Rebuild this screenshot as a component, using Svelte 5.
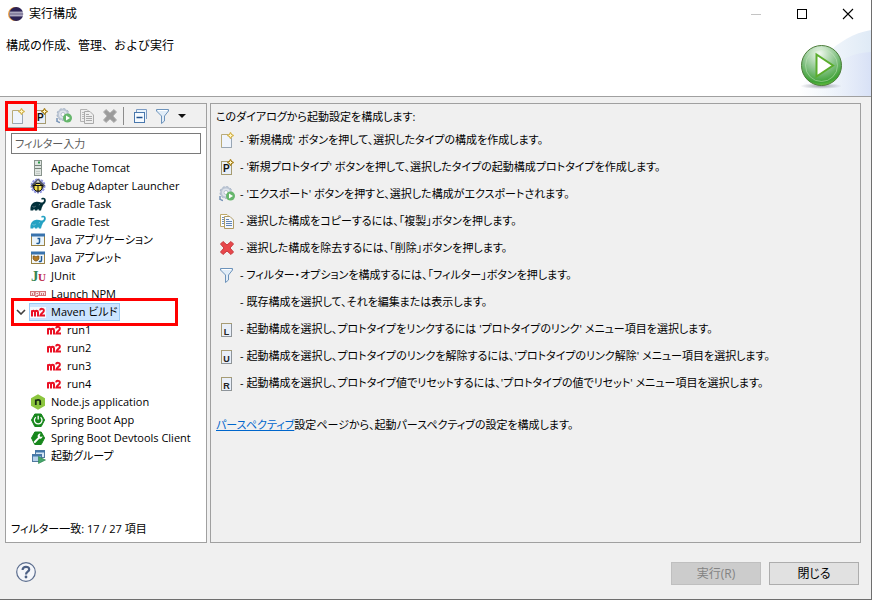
<script lang="ts">
	type Item = { icon: string; label: string; child?: boolean; open?: boolean };

	const items: Item[] = [
		{ icon: "tomcat", label: "Apache Tomcat" },
		{ icon: "debug", label: "Debug Adapter Launcher" },
		{ icon: "gradleTask", label: "Gradle Task" },
		{ icon: "gradleTest", label: "Gradle Test" },
		{ icon: "java", label: "Java アプリケーション" },
		{ icon: "applet", label: "Java アプレット" },
		{ icon: "junit", label: "JUnit" },
		{ icon: "npm", label: "Launch NPM" },
		{ icon: "maven", label: "Maven ビルド", open: true },
		{ icon: "maven", label: "run1", child: true },
		{ icon: "maven", label: "run2", child: true },
		{ icon: "maven", label: "run3", child: true },
		{ icon: "maven", label: "run4", child: true },
		{ icon: "node", label: "Node.js application" },
		{ icon: "boot", label: "Spring Boot App" },
		{ icon: "devtools", label: "Spring Boot Devtools Client" },
		{ icon: "group", label: "起動グループ" },
	];

	const hints = [
		{ icon: "new", text: "- '新規構成' ボタンを押して、選択したタイプの構成を作成します。" },
		{ icon: "proto", text: "- '新規プロトタイプ' ボタンを押して、選択したタイプの起動構成プロトタイプを作成します。" },
		{ icon: "export", text: "- 'エクスポート' ボタンを押すと、選択した構成がエクスポートされます。" },
		{ icon: "copy", text: "- 選択した構成をコピーするには、「複製」ボタンを押します。" },
		{ icon: "delete", text: "- 選択した構成を除去するには、「削除」ボタンを押します。" },
		{ icon: "filter", text: "- フィルター・オプションを構成するには、「フィルター」ボタンを押します。" },
		{ icon: "", text: "- 既存構成を選択して、それを編集または表示します。" },
		{ icon: "L", text: "- 起動構成を選択し、プロトタイプをリンクするには 'プロトタイプのリンク' メニュー項目を選択します。" },
		{ icon: "U", text: "- 起動構成を選択し、プロトタイプのリンクを解除するには、'プロトタイプのリンク解除' メニュー項目を選択します。" },
		{ icon: "R", text: "- 起動構成を選択し、プロトタイプ値でリセットするには、'プロトタイプの値でリセット' メニュー項目を選択します。" },
	];

	const tools = [
		{ icon: "new", label: "新規構成", disabled: false },
		{ icon: "proto", label: "新規プロトタイプ", disabled: false },
		{ icon: "export", label: "エクスポート", disabled: false },
		{ icon: "copyOff", label: "複製", disabled: true },
		{ icon: "deleteOff", label: "削除", disabled: true },
	];

	let selected = $state(8);
	let filter = $state("");
</script>

{#snippet elephant(color: string)}
	<path
		d="M0.5 14.5C0 10 2 6.5 5.5 6C7.5 5.6 9.5 6 11 6.6C12.8 6.6 14 5.4 14 4.2C14 3.2 12.8 3 12.2 3.8L11 3C11.8 1.5 14 1.2 15.2 2.5C16.6 4.4 15.4 7.2 13.4 8.6C12.6 9.4 12.4 11 11.8 11.6L11 14.5H8.8C8.8 12.8 7.4 12.8 7.2 14.5H5C4.8 12.8 3.4 12.8 3.2 14.5Z"
		fill={color}
	/>
	<path d="M8.8 9L10 8.4M2.4 10.4C3.4 11.4 5 11.2 5.8 10" stroke="#fff" stroke-opacity=".55" stroke-width=".6" fill="none" />
{/snippet}

{#snippet sparkle(color: string)}
	<path d="M11.5 0L12.8 2.2L15 3.5L12.8 4.8L11.5 7L10.2 4.8L8 3.5L10.2 2.2Z" fill={color} stroke={color} stroke-width=".5" />
	<path d="M11.5 1.8V5.2M9.8 3.5H13.2" stroke="#fff6c8" />
{/snippet}

{#snippet icon(name: string)}
	<svg class="icon" viewBox="0 0 16 16" aria-hidden="true">
		{#if name === "new"}
			<path d="M2.5 2.5H9L12.5 6V15.5H2.5Z" fill="#eff4fc" stroke="#b9ab78" />
			<path d="M12.5 6V15.5H2.5" fill="none" stroke="#98a6b5" />
			{@render sparkle("#d3b145")}
		{:else if name === "proto"}
			<rect x="2.5" y="2.5" width="10" height="13" fill="#e9eff8" stroke="#a59b70" />
			<text x="4" y="13" font-size="10" font-weight="700" fill="#111">P</text>
			{@render sparkle("#a47b10")}
		{:else if name === "export"}
			<circle cx="7" cy="6.5" r="5" fill="#e0e5ed" stroke="#bcc6d4" stroke-width="2" />
			<circle cx="7" cy="6.5" r="6" fill="none" stroke="#a3b1c4" stroke-dasharray="2 2" />
			<circle cx="7" cy="6.5" r="2" fill="#fff" stroke="#b8bfd0" />
			<path d="M1 10V14M1 13C2 14 3 14.5 4 14.5" stroke="#7894b8" stroke-width="1.5" fill="none" />
			<circle cx="11.5" cy="10" r="4.5" fill="#66b66c" />
			<path d="M10 7.5L14 10L10 12.5Z" fill="#fff" />
		{:else if name === "copy" || name === "copyOff"}
			{@const off = name === "copyOff"}
			<path d="M1.5 1.5H8L10.5 4V13.5H1.5Z" fill={off ? "#eee" : "#fff"} stroke={off ? "#b3b3b3" : "#c0aa6a"} />
			<path d="M3 4.5H6M3 6.5H6M3 8.5H6M3 10.5H6" stroke={off ? "#bbb" : "#7190b5"} />
			<path d="M5.5 3.5H11L14.5 7V15.5H5.5Z" fill={off ? "#eee" : "#f4f8ff"} stroke={off ? "#aaa" : "#b09b62"} />
			<path d="M7 6.5H10M7 8.5H13M7 10.5H13M7 12.5H13" stroke={off ? "#aaa" : "#6387b4"} />
		{:else if name === "delete" || name === "deleteOff"}
			{@const off = name === "deleteOff"}
			<path
				d="M1.5 4L4 1.5L8 5L12 1.5L14.5 4L11 8L14.5 12L12 14.5L8 11L4 14.5L1.5 12L5 8Z"
				fill={off ? "#9b9b9b" : "#e8474b"}
				stroke={off ? "#b4b4b4" : "#c8393d"}
				stroke-linejoin="round"
			/>
		{:else if name === "filter"}
			<path d="M1.5 1.5H13.5V3L9.5 8V13L6.5 15.5V8L1.5 3Z" fill="#e1edf8" stroke="#6d93bb" stroke-linejoin="round" />
			<path d="M3 2.5H12" stroke="#fff" />
		{:else if name === "collapse"}
			<path d="M4.5 11V1.5H14.5V11" fill="#e9f3fc" stroke="#7d9cc4" />
			<rect x="2.5" y="4.5" width="10" height="10" fill="#f5faff" stroke="#4a78ad" />
			<path d="M4.5 9.5H10.5" stroke="#1d4f8c" stroke-width="1.5" />
		{:else if name === "L" || name === "U" || name === "R"}
			<rect x="2.5" y="2.5" width="10" height="13" fill="#e9eff8" stroke="#a79c74" />
			<path d="M12.5 3V15.5H2.5" fill="none" stroke="#8d949b" />
			<text x="7.5" y="14" text-anchor="middle" font-size="9" font-weight="700" fill="#222">{name}</text>
		{:else if name === "tomcat"}
			<rect x="4.5" y=".5" width="7" height="15" fill="#dfe5e1" stroke="#89948d" />
			<path d="M8 2.5H10" stroke="#2a9a48" stroke-width="2" />
			<path d="M5 5.5H11M5 8.5H11" stroke="#758179" />
			<path d="M6 11.5H10M6 13.5H10" stroke="#c3cac5" />
		{:else if name === "debug"}
			<circle cx="8" cy="8" r="6.5" fill="#aeb4e8" stroke="#9095df" stroke-width="2" stroke-dasharray="2 1" />
			<path d="M8 .5L15 7.5L8 15L1 7.5Z" fill="#50545e" />
			<path d="M8 2L10 4.5H6Z" fill="#d9d9d9" />
			<path d="M4 8L6 5.5H10L12 8V11L10 13H6L4 11Z" fill="#f4df4c" stroke="#111" />
			<path d="M3 7.5H13M8 7V13" stroke="#111" />
		{:else if name === "gradleTask"}
			{@render elephant("#02303a")}
		{:else if name === "gradleTest"}
			{@render elephant("#25a2c3")}
		{:else if name === "java"}
			<rect x="1.5" y="2.5" width="13" height="11" fill="#eaf4fb" stroke="#9b8345" />
			<path d="M1 3H15" stroke="#3973ad" stroke-width="3" />
			<path d="M7.5 6.5H9.5V10C9.5 11.6 7.5 11.8 6.5 11" stroke="#205b96" stroke-width="1.5" fill="none" />
		{:else if name === "applet"}
			<rect x="1.5" y="2.5" width="13" height="11" fill="#f2f6f8" stroke="#9b8345" />
			<path d="M1 3H15" stroke="#3973ad" stroke-width="3" />
			<path d="M3 6H5L6 7L7 6H9V9L7 11H5L3 9Z" fill="#b47a24" stroke="#6c491b" stroke-width=".6" />
			<path d="M11.5 6V10C11.5 11.6 10 12 9 11.2" stroke="#205b96" stroke-width="1.5" fill="none" />
		{:else if name === "junit"}
			<text class="serif" x="1" y="13" font-size="15" font-weight="700" fill="#368653">J</text>
			<text class="serif" x="8" y="13" font-size="11" font-weight="700" fill="#bd2949">U</text>
		{:else if name === "npm"}
			<path d="M0 5H16V10H8V11H5V10H0Z" fill="#d07478" />
			<path d="M1.5 9V6.5H3.5V9M6 10V6.5H8.5V8.5H6M10.5 9V6.5H12.5V9M14.5 9V6.5H12.5" stroke="#fff" stroke-width=".8" fill="none" />
		{:else if name === "maven"}
			<rect y="3" width="16" height="11" fill="#fff" fill-opacity=".8" />
			<path d="M2 12.5V6.2M2 8C2 6.4 5 6.4 5 8.2V12.5M5 8.2C5 6.4 8 6.4 8 8.2V12.5" stroke="#ea1024" stroke-width="2" fill="none" />
			<path d="M10 6.4C10.4 4.2 14.2 4.4 13.8 6.8C13.6 8.6 11 9.4 10.4 11.5H15" stroke="#ea1024" stroke-width="2" fill="none" />
		{:else if name === "node"}
			<path d="M8 .3L15 4.2V11.8L8 15.7L1 11.8V4.2Z" fill="#8cc63f" />
			<path d="M5.8 11V5.5M5.8 7C6.4 5.4 10.2 5.2 10.2 7.6V11" stroke="#172e12" stroke-width="1.8" fill="none" />
		{:else if name === "boot"}
			<path d="M4.8 2H11.2L14.6 8L11.2 14.5H4.8L1.5 8Z" fill="#17871c" stroke="#17871c" stroke-linejoin="round" />
			<path d="M5.8 5.2A3.8 3.8 0 1 0 10.6 5.2M8.2 3.8V7.5" stroke="#fff" stroke-width="1.3" fill="none" />
		{:else if name === "devtools"}
			<path d="M4.8 2H11.2L14.6 8L11.2 14.5H4.8L1.5 8Z" fill="#17871c" stroke="#17871c" stroke-linejoin="round" />
			<path d="M4.8 12L9 7.6" stroke="#fff" stroke-width="2" stroke-linecap="round" />
			<path d="M10.6 3.6C8.4 3.6 7 5.6 8 7.6C9 9.4 12 9.2 12.6 6.2L10.8 7L9.6 5.8Z" fill="#fff" />
		{:else if name === "group"}
			<rect x="5.5" y="2.5" width="9" height="7" fill="#d5e6f6" stroke="#52799f" />
			<path d="M5 3.5H15" stroke="#4378aa" stroke-width="2" />
			<rect x="2.5" y="6.5" width="9" height="7" fill="#b6d1ec" stroke="#52799f" />
			<path d="M2 7.5H12" stroke="#4378aa" stroke-width="2" />
			<path d="M8.5 8.5L15.5 12L8.5 15.5Z" fill="#46a66a" stroke="#28814a" stroke-width=".6" />
		{/if}
	</svg>
{/snippet}

<div class="window">
	<div class="titleBar">
		<svg class="icon" viewBox="0 0 16 16" aria-hidden="true">
			<circle cx="7" cy="8" r="7" fill="#f1a13e" />
			<circle cx="8.2" cy="8" r="7" fill="#2c2255" />
			<path d="M1.6 6.2H15M1.2 8H15.2M1.6 9.8H15" stroke="#e5e2ef" />
		</svg>
		<span class="title">実行構成</span>
		<button class="control" disabled aria-label="最小化">
			<svg viewBox="0 0 12 12"><path d="M1 6.5H11" stroke="#c4c4c4" /></svg>
		</button>
		<button class="control" aria-label="最大化">
			<svg viewBox="0 0 12 12"><rect x="1.5" y="1.5" width="9" height="9" fill="none" stroke="#000" /></svg>
		</button>
		<button class="control" aria-label="ウィンドウを閉じる">
			<svg viewBox="0 0 12 12"><path d="M1 1L11 11M11 1L1 11" stroke="#000" stroke-width="1.1" /></svg>
		</button>
	</div>

	<header>
		<h1>構成の作成、管理、および実行</h1>
		<svg class="banner" viewBox="0 0 90 68" aria-hidden="true">
			<defs>
				<linearGradient id="swoosh" x1="0" x2="1">
					<stop offset="0" stop-color="#fff" />
					<stop offset="1" stop-color="#dfeaf6" />
				</linearGradient>
				<linearGradient id="swooshFront" x1="0" x2="1">
					<stop offset="0" stop-color="#fff" stop-opacity="0" />
					<stop offset="1" stop-color="#d8e1f6" />
				</linearGradient>
				<radialGradient id="ball" cx=".45" cy=".2" r=".85">
					<stop offset="0" stop-color="#f1f8ef" />
					<stop offset=".55" stop-color="#7fbf80" />
					<stop offset=".85" stop-color="#3fa235" />
					<stop offset="1" stop-color="#80d348" />
				</radialGradient>
				<radialGradient id="shade">
					<stop offset="0" stop-color="#667" stop-opacity=".6" />
					<stop offset="1" stop-color="#667" stop-opacity="0" />
				</radialGradient>
			</defs>
			<path d="M16 68C30 39 55 8 90 2V68Z" fill="url(#swoosh)" />
			<path d="M22 68C38 46 60 25 90 24V68Z" fill="url(#swooshFront)" />
			<ellipse cx="40" cy="58" rx="21" ry="3" fill="url(#shade)" />
			<circle cx="40.5" cy="37.5" r="20" fill="url(#ball)" stroke="#4d7d3b" />
			<circle cx="40.5" cy="37.5" r="16" fill="none" stroke="#c5e8bd" stroke-opacity=".5" />
			<path d="M35.5 26.5L52 37.5L35.5 48.5Z" fill="#fff" stroke="#5bad2d" stroke-width="2" />
		</svg>
	</header>

	<main>
		<section class="configs">
			<div class="toolBar">
				{#each tools as tool, i}
					<button class="tool" disabled={tool.disabled} aria-label={tool.label}>
						{@render icon(tool.icon)}
						{#if i === 0}
							<span class="mark markTool"></span>
						{/if}
					</button>
				{/each}
				<span class="separator"></span>
				<button class="tool" aria-label="すべて縮小表示">{@render icon("collapse")}</button>
				<button class="tool" aria-label="フィルター">{@render icon("filter")}</button>
				<button class="drop" aria-label="フィルター・メニュー">
					<svg viewBox="0 0 8 4"><path d="M0 0H8L4 4Z" fill="#111" /></svg>
				</button>
			</div>

			<input class="filter" type="text" placeholder="フィルター入力" aria-label="フィルター入力" bind:value={filter} />

			<ul class="tree">
				{#each items as item, i}
					<li class:child={item.child}>
						<span class="twisty">
							{#if item.open}
								<svg viewBox="0 0 10 6"><path d="M1 1L5 5L9 1" fill="none" stroke="#404040" stroke-width="1.6" /></svg>
							{/if}
						</span>
						<button class="node" class:selected={selected === i} onclick={() => (selected = i)}>
							{@render icon(item.icon)}
							<span>{item.label}</span>
						</button>
						{#if item.open}
							<span class="mark markRow"></span>
						{/if}
					</li>
				{/each}
			</ul>

			<p class="status">フィルター一致: 17 / 27 項目</p>
		</section>

		<section class="details">
			<p>このダイアログから起動設定を構成します:</p>
			<ul class="hints">
				{#each hints as hint}
					<li>{@render icon(hint.icon)}<span>{hint.text}</span></li>
				{/each}
			</ul>
			<p class="link"><a href="#perspective">パースペクティブ</a>設定ページから、起動パースペクティブの設定を構成します。</p>
		</section>
	</main>

	<footer>
		<button class="help" aria-label="ヘルプ">
			<svg viewBox="0 0 20 20">
				<circle cx="10" cy="10" r="9.3" fill="#f4f6fa" stroke="#5b6d8e" stroke-width="1.2" />
				<path d="M6.6 8C6.4 3.8 13.4 3.8 13.2 7.6C13.1 9.8 10 9.7 10 12.4" fill="none" stroke="#4d6185" stroke-width="2.2" />
				<circle cx="10" cy="15" r="1.4" fill="#4d6185" />
			</svg>
		</button>
		<button class="action" disabled>実行(R)</button>
		<button class="action">閉じる</button>
	</footer>
</div>

<style>
	:global(body) {
		margin: 0;
	}

	.window {
		box-sizing: border-box;
		display: flex;
		flex-direction: column;
		min-height: 100vh;

		background-color: #f0f0f0;
		border-right: 1px solid #6e6e6e;
		border-bottom: 1px solid #6e6e6e;

		color: #000;
		font-family: "Open Sans", "Noto Sans CJK JP", sans-serif;
		font-size: 11px;
		font-feature-settings: "palt";
		line-height: 18px;
	}

	button,
	input {
		box-sizing: border-box;
		margin: 0;
		padding: 0;
		border: none;
		background: none;
		color: inherit;
		font: inherit;
		font-feature-settings: inherit;
	}

	h1,
	p,
	ul {
		margin: 0;
		padding: 0;
		list-style: none;
	}

	svg {
		display: block;
	}

	.icon {
		flex: none;
		width: 16px;
		height: 16px;
		font-family: "Liberation Sans", sans-serif;
	}

	.serif {
		font-family: "Liberation Serif", serif;
	}

	.titleBar {
		display: flex;
		align-items: center;
		height: 28px;
		padding-left: 8px;
		background-color: #fff;
	}

	.title {
		flex: 1;
		padding-left: 5px;
		font-size: 12px;
	}

	.control {
		display: flex;
		align-items: center;
		justify-content: center;
		width: 46px;
		height: 28px;
	}

	.control svg {
		width: 12px;
		height: 12px;
	}

	header {
		display: flex;
		justify-content: space-between;
		background-color: #fff;
		border-bottom: 1px solid #a0a0a0;
	}

	h1 {
		padding: 9px 6px;
		font-size: 12px;
		font-weight: 400;
		font-feature-settings: normal;
	}

	.banner {
		flex: none;
		width: 90px;
		height: 68px;
	}

	main {
		display: flex;
		flex: 1;
		gap: 3px;
		padding: 6px 10px 0 5px;
	}

	.configs,
	.details {
		box-sizing: border-box;
		border: 1px solid #a0a0a0;
	}

	.configs {
		display: flex;
		flex: none;
		flex-direction: column;
		width: 202px;
		background-color: #fff;
	}

	.toolBar {
		display: flex;
		align-items: center;
		height: 23px;
		background-color: #f0f0f0;
		border-bottom: 1px solid #a0a0a0;
	}

	.tool {
		display: flex;
		align-items: center;
		justify-content: center;
		position: relative;
		width: 23px;
		height: 23px;
	}

	.separator {
		width: 1px;
		height: 18px;
		margin: 0 4px 0 2px;
		background-color: #8c8c8c;
	}

	.drop {
		width: 16px;
		height: 23px;
		padding: 0 4px;
	}

	.mark {
		box-sizing: border-box;
		position: absolute;
		z-index: 1;
		border: 3px solid #ff0000;
		pointer-events: none;
	}

	.markTool {
		top: -3px;
		left: -1px;
		width: 32px;
		height: 30px;
	}

	.markRow {
		top: -5px;
		left: 5px;
		width: 167px;
		height: 28px;
	}

	.filter {
		height: 21px;
		margin: 5px;
		padding: 0 3px;
		border: 1px solid #7a7a7a;
		background-color: #fff;
	}

	.filter::placeholder {
		color: #5c5c5c;
		opacity: 1;
	}

	.tree {
		flex: 1;
	}

	.tree li {
		display: flex;
		align-items: center;
		position: relative;
		height: 18px;
		padding-left: 10px;
	}

	.tree .child {
		padding-left: 26px;
	}

	.twisty {
		flex: none;
		width: 13px;
	}

	.twisty svg {
		width: 10px;
		height: 6px;
	}

	.node {
		display: flex;
		flex: none;
		align-items: center;
		gap: 5px;
		height: 18px;
		padding-right: 2px;
		border: 1px solid transparent;
		line-height: 16px;
		white-space: nowrap;
	}

	.selected {
		background-color: #cce4ff;
		border-color: #99c9f5;
	}

	.status {
		padding: 4px 5px;
	}

	.details {
		flex: 1;
		padding: 4px 5px;
	}

	.hints li {
		display: flex;
		align-items: center;
		gap: 5px;
		height: 27px;
		padding-left: 3px;
	}

	.link {
		padding-top: 20px;
	}

	a {
		color: #0066cc;
	}

	footer {
		display: flex;
		align-items: flex-start;
		gap: 8px;
		padding: 19px 12px 14px 16px;
	}

	.help {
		width: 20px;
		height: 20px;
		margin-right: auto;
	}

	.action {
		width: 90px;
		height: 23px;
		border: 1px solid #adadad;
		background-color: #e1e1e1;
		font-size: 12px;
	}

	.action:disabled {
		border-color: #bfbfbf;
		background-color: #cccccc;
		color: #838383;
	}
</style>
